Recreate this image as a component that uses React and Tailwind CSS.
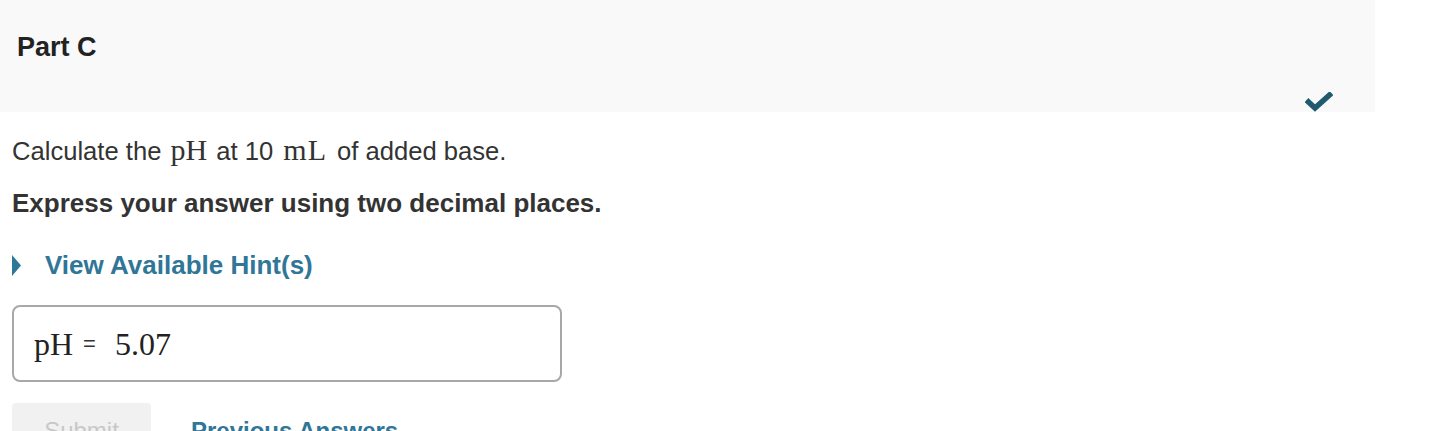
export default function App() {
  const sans = { fontFamily: '"Liberation Sans", Arial, sans-serif' };
  return (
    <div className="w-[1449px] h-[431px] overflow-hidden bg-white text-[#333]" style={sans}>
      <div className="w-[1375px]">
        <div className="relative h-[112px] bg-[#f9f9f9] pl-[17px] pt-[32px]">
          <h2 className="text-[27px] font-bold text-[#222] leading-[30px]">Part C</h2>
          <svg className="absolute left-[1305px] top-[92px]" width="28" height="20" viewBox="0 0 28 20">
            <path d="M3.5 10 L10 16 L24.5 3" fill="none" stroke="#1f5a6e" strokeWidth="5.5" strokeLinejoin="miter" strokeLinecap="square" />
          </svg>
        </div>
        <div className="pl-[12px] pt-[22px]">
          <p className="text-[25.6px] leading-[32px] text-[#333]">
            Calculate the <span className="mx-[2px] font-['Liberation_Serif',serif] text-[30px]">pH</span> at 10 <span className="mx-[3px] font-['Liberation_Serif',serif] text-[30px] tracking-[1px]">mL</span> of added base.
          </p>
          <p className="mt-[20px] text-[26px] leading-[32px] font-bold text-[#333]">Express your answer using two decimal places.</p>
          <div className="mt-[31px] flex items-center h-[30px]">
            <svg width="9" height="21" viewBox="0 0 9 21"><path d="M0 0 L9 10.5 L0 21 Z" fill="#2f7697" /></svg>
            <span className="ml-[24px] text-[26px] font-bold text-[#2f7697]">View Available Hint(s)</span>
          </div>
          <div className="mt-[25px] w-[550px] h-[77px] border-2 border-[#a8a8a8] rounded-[8px] flex items-center pl-[20px]">
            <span className="font-['Liberation_Serif',serif] text-[32px] text-[#222]">pH</span>
            <span className="ml-[10px] text-[22px] text-[#333]">=</span>
            <span className="ml-[19px] font-['Liberation_Serif',serif] text-[32px] text-[#222]">5.07</span>
          </div>
          <div className="mt-[21px] flex items-start">
            <div className="w-[139px] h-[50px] bg-[#f1f1f1] rounded-[4px] flex justify-center pt-[10px] text-[24px] text-[#c8c8c8]">Submit</div>
            <span className="ml-[40px] pt-[10px] text-[24px] font-bold text-[#2f7697]">Previous Answers</span>
          </div>
        </div>
      </div>
    </div>
  );
}
